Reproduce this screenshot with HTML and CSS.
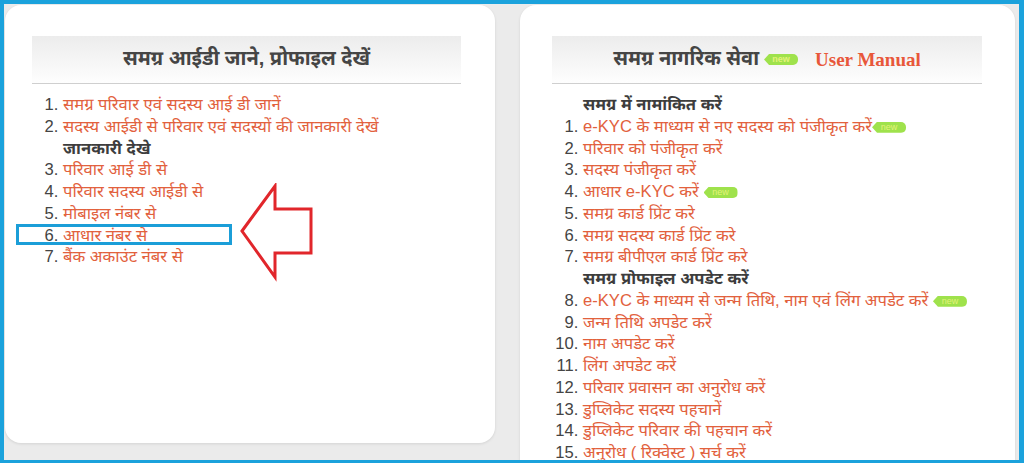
FILE: index.html
```html
<!DOCTYPE html>
<html lang="hi">
<head>
<meta charset="utf-8">
<title>समग्र</title>
<link rel="stylesheet" href="styles.css">
</head>
<body>
<div class="frame">
  <section class="card card-left">
    <div class="card-head">
      <h2 class="title">समग्र आईडी जाने, प्रोफाइल देखें</h2>
    </div>
    <ol class="links">
      <li><a href="#">समग्र परिवार एवं सदस्य आई डी जानें</a></li>
      <li><a href="#">सदस्य आईडी से परिवार एवं सदस्यों की जानकारी देखें</a></li>
      <li class="sub">जानकारी देखे</li>
      <li><a href="#">परिवार आई डी से</a></li>
      <li><a href="#">परिवार सदस्य आईडी से</a></li>
      <li><a href="#">मोबाइल नंबर से</a></li>
      <li><a href="#">आधार नंबर से</a></li>
      <li><a href="#">बैंक अकाउंट नंबर से</a></li>
    </ol>
    <div class="highlight"></div>
    <svg class="arrow" width="80" height="100" viewBox="0 0 80 100">
      <polygon points="3,48 36,3 36,26 72,26 72,70 36,70 36,94" fill="none" stroke="#e1262b" stroke-width="3" stroke-linejoin="miter"/>
    </svg>
  </section>
  <section class="card card-right">
    <div class="card-head">
      <h2 class="title">समग्र नागरिक सेवा<span class="badge badge-head">new</span><a class="manual" href="#">User Manual</a></h2>
    </div>
    <ol class="links">
      <li class="sub">समग्र में नामांकित करें</li>
      <li><a href="#">e-KYC के माध्यम से नए सदस्य को पंजीकृत करें</a><span class="badge">new</span></li>
      <li><a href="#">परिवार को पंजीकृत करें</a></li>
      <li><a href="#">सदस्य पंजीकृत करें</a></li>
      <li><a href="#">आधार e-KYC करें</a> <span class="badge">new</span></li>
      <li><a href="#">समग्र कार्ड प्रिंट करे</a></li>
      <li><a href="#">समग्र सदस्य कार्ड प्रिंट करे</a></li>
      <li><a href="#">समग्र बीपीएल कार्ड प्रिंट करे</a></li>
      <li class="sub">समग्र प्रोफाइल अपडेट करें</li>
      <li><a href="#">e-KYC के माध्यम से जन्म तिथि, नाम एवं लिंग अपडेट करें</a> <span class="badge">new</span></li>
      <li><a href="#">जन्म तिथि अपडेट करें</a></li>
      <li><a href="#">नाम अपडेट करें</a></li>
      <li><a href="#">लिंग अपडेट करें</a></li>
      <li><a href="#">परिवार प्रवासन का अनुरोध करें</a></li>
      <li><a href="#">डुप्लिकेट सदस्य पहचानें</a></li>
      <li><a href="#">डुप्लिकेट परिवार की पहचान करें</a></li>
      <li><a href="#">अनुरोध ( रिक्वेस्ट ) सर्च करें</a></li>
    </ol>
  </section>
</div>
</body>
</html>
```

FILE: styles.css
```css
html, body {
  margin: 0;
  padding: 0;
}
body {
  font-family: "Liberation Sans", "Noto Sans Devanagari", "Lohit Devanagari", "Noto Sans", sans-serif;
  background: #1ba2dc;
}
.frame {
  box-sizing: border-box;
  width: 1024px;
  height: 463px;
  border-style: solid;
  border-color: #1ba2dc;
  border-width: 4px 5px 3px 4px;
  background: #ebebeb;
  overflow: hidden;
  display: grid;
  grid-template-columns: 490px 495px;
  column-gap: 25px;
  align-items: start;
  padding: 1px 0 0 1px;
}
.card {
  position: relative;
  box-sizing: border-box;
  background: #fff;
  border-radius: 16px;
  box-shadow: 0 1px 3px rgba(0, 0, 0, 0.10);
}
.card-left {
  height: 438px;
  padding: 31px 34px 0 27px;
}
.card-right {
  height: 480px;
  padding: 31px 33px 0 32px;
}
.card-head {
  height: 47px;
  border-bottom: 1px solid #cfcfcf;
  background: linear-gradient(#ececec, #fefefe);
  display: flex;
  align-items: center;
  justify-content: center;
}
.title {
  margin: 0;
  font-size: 20px;
  font-weight: bold;
  color: #454545;
  display: flex;
  align-items: center;
}
.manual {
  font-family: "Liberation Serif", "DejaVu Serif", serif;
  font-size: 19px;
  font-weight: bold;
  color: #e8573a;
  text-decoration: none;
  margin-left: 17px;
}
.links {
  margin: 10px 0 0;
  padding-left: 31px;
  font-size: 16.6px;
  line-height: 21.75px;
  color: #444;
}
.links li.sub {
  display: block;
  font-weight: bold;
  color: #3d3d3d;
}
.links a {
  color: #e2613d;
  text-decoration: none;
}
.badge {
  display: inline-block;
  vertical-align: 2px;
  width: 34px;
  height: 11px;
  line-height: 11px;
  font-size: 9px;
  text-align: center;
  color: #e4f27a;
  background: #9fe24c;
  border-radius: 0 5px 5px 0;
  clip-path: polygon(5px 0, 100% 0, 100% 100%, 5px 100%, 0 50%);
}
.badge-head {
  margin-left: 5px;
  vertical-align: middle;
}
.highlight {
  position: absolute;
  left: 11px;
  top: 219px;
  width: 210px;
  height: 15px;
  border: 3px solid #1b9ed8;
}
.arrow {
  position: absolute;
  left: 234px;
  top: 178px;
}
```
